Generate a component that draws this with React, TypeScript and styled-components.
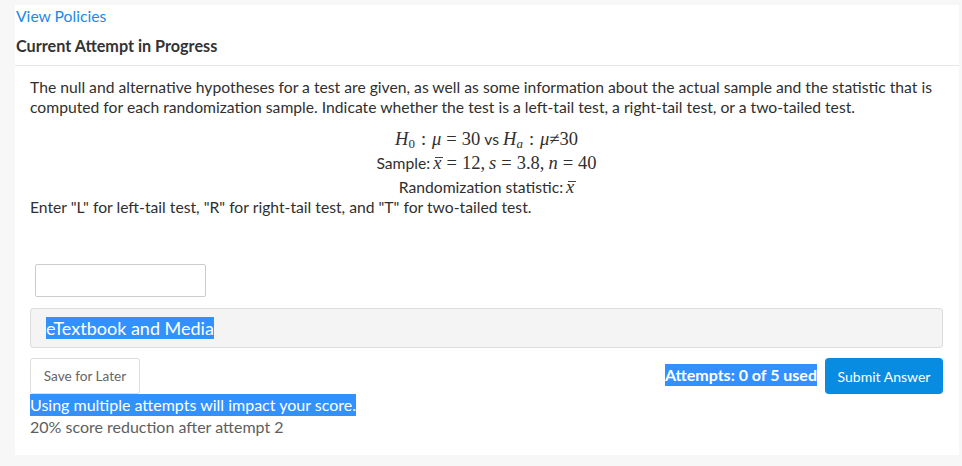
import React from "react";
import styled, {createGlobalStyle} from "styled-components";

const GlobalStyle = createGlobalStyle`
  html, body {
    margin: 0;
    padding: 0;
    background: #f7f7f7;
  }
  body {
    font-family: Lato, "Open Sans", sans-serif;
    color: #2f2f2f;
  }
`

const Panel = styled.div`
  margin: 5px 3px 0 15px;
  height: 450px;
  background: #fff;
  display: flex;
  flex-direction: column;
`

const Header = styled.div`
  padding: 1px 0 0 1px;
  border-bottom: 1px solid #e6e6e6;
  height: 61px;
  box-sizing: border-box;
`

const PolicyLink = styled.a`
  display: block;
  color: #1a8ae6;
  font-size: 15.7px;
  line-height: 20px;
  text-decoration: none;
`

const Title = styled.div`
  margin-top: 10px;
  font-size: 16.2px;
  font-weight: bold;
  line-height: 20px;
  color: #333;
`

const Body = styled.div`
  padding: 11px 16px 0 15px;
  font-size: 15.7px;
  line-height: 20px;
`

const Question = styled.p`
  margin: 0;
`

const MathBlock = styled.div`
  margin-top: 10px;
  display: flex;
  flex-direction: column;
  align-items: center;
  font-size: 15.7px;
`

const MathLine = styled.div`
  height: 24px;
  line-height: 24px;
  white-space: nowrap;
`

const M = styled.span<{ $after?: number }>`
  font-family: "Liberation Serif", "DejaVu Serif", serif;
  font-size: 18.5px;
  margin-right: ${({$after}) => $after ?? 0}px;
`

const Mi = styled.i`
  font-family: "Liberation Serif", "DejaVu Serif", serif;
  font-size: 18.5px;
`

const Sub = styled.sub<{ $italic?: boolean }>`
  font-family: "Liberation Serif", "DejaVu Serif", serif;
  font-style: ${({$italic}) => ($italic ? "italic" : "normal")};
  font-size: 13px;
  vertical-align: -3px;
  line-height: 0;
`

const Op = styled.span<{ $gap?: number }>`
  font-family: "Liberation Serif", "DejaVu Serif", serif;
  font-size: 18.5px;
  margin: 0 ${({$gap}) => $gap ?? 5}px;
`

const XBar = styled.i`
  position: relative;
  font-family: "Liberation Serif", "DejaVu Serif", serif;
  font-size: 18.5px;
  margin-left: 3px;

  &::after {
    content: "";
    position: absolute;
    left: 2px;
    width: 8px;
    top: 4px;
    height: 1px;
    background: #444;
  }
`

const Instruction = styled.p`
  margin: -2px 0 0;
`

const AnswerInput = styled.input`
  display: block;
  margin: 47px 0 0 5px;
  width: 171px;
  height: 33px;
  box-sizing: border-box;
  border: 1px solid #ccc;
  border-radius: 2px;
`

const MediaBar = styled.div`
  margin-top: 11px;
  height: 40px;
  box-sizing: border-box;
  border: 1px solid #dcdcdc;
  border-radius: 3px;
  background: #f4f4f4;
  display: flex;
  align-items: center;
  padding-left: 15px;
`

const Selected = styled.span<{ $size: number; $bold?: boolean }>`
  background: #3390ff;
  color: #fff;
  font-size: ${({$size}) => $size}px;
  font-weight: ${({$bold}) => ($bold ? "bold" : "normal")};
  line-height: 22px;
  display: inline-block;
`

const Footer = styled.div`
  margin-top: 10px;
  display: flex;
  align-items: flex-start;
  justify-content: space-between;
`

const SaveButton = styled.button`
  width: 110px;
  height: 36px;
  background: #fff;
  border: 1px solid #ddd;
  border-radius: 3px;
  color: #666;
  font-family: Lato, sans-serif;
  font-size: 13.6px;
`

const RightGroup = styled.div`
  display: flex;
  align-items: flex-start;
  gap: 8px;
`

const Attempts = styled.div`
  padding-top: 6px;
`

const SubmitButton = styled.button`
  width: 118px;
  height: 36px;
  background: #088ce1;
  border: none;
  border-radius: 4px;
  color: #fff;
  font-family: Lato, sans-serif;
  font-size: 14px;
`

const Notice = styled.div`
  font-size: 16px;
  line-height: 22px;
`

const Reduction = styled.div`
  font-size: 16px;
  line-height: 22px;
  color: #5e5e5e;
`

export default function App() {
  return (
    <>
      <GlobalStyle/>
      <Panel>
        <Header>
          <PolicyLink href="#">View Policies</PolicyLink>
          <Title>Current Attempt in Progress</Title>
        </Header>
        <Body>
          <Question>
            The null and alternative hypotheses for a test are given, as well as some information about the actual
            sample and the statistic that is computed for each randomization sample. Indicate whether the test is a
            left-tail test, a right-tail test, or a two-tailed test.
          </Question>
          <MathBlock>
            <MathLine>
              <Mi>H</Mi><Sub>0</Sub><Op $gap={6}>:</Op><Mi>μ</Mi><Op>=</Op><M>30</M> vs <Mi>H</Mi><Sub $italic>a</Sub>
              <Op $gap={6}>:</Op><Mi>μ</Mi><M>≠</M><M>30</M>
            </MathLine>
            <MathLine>
              Sample:<XBar>x</XBar><Op>=</Op><M $after={4}>12,</M><Mi>s</Mi><Op>=</Op><M $after={4}>3.8,</M><Mi>n</Mi>
              <Op>=</Op><M>40</M>
            </MathLine>
            <MathLine>
              Randomization statistic:<XBar>x</XBar>
            </MathLine>
          </MathBlock>
          <Instruction>Enter "L" for left-tail test, "R" for right-tail test, and "T" for two-tailed test.</Instruction>
          <AnswerInput type="text"/>
          <MediaBar>
            <Selected $size={18}>eTextbook and Media</Selected>
          </MediaBar>
          <Footer>
            <SaveButton>Save for Later</SaveButton>
            <RightGroup>
              <Attempts>
                <Selected $size={16} $bold>Attempts: 0 of 5 used</Selected>
              </Attempts>
              <SubmitButton>Submit Answer</SubmitButton>
            </RightGroup>
          </Footer>
          <Notice>
            <Selected $size={16}>Using multiple attempts will impact your score.</Selected>
          </Notice>
          <Reduction>20% score reduction after attempt 2</Reduction>
        </Body>
      </Panel>
    </>
  )
}
